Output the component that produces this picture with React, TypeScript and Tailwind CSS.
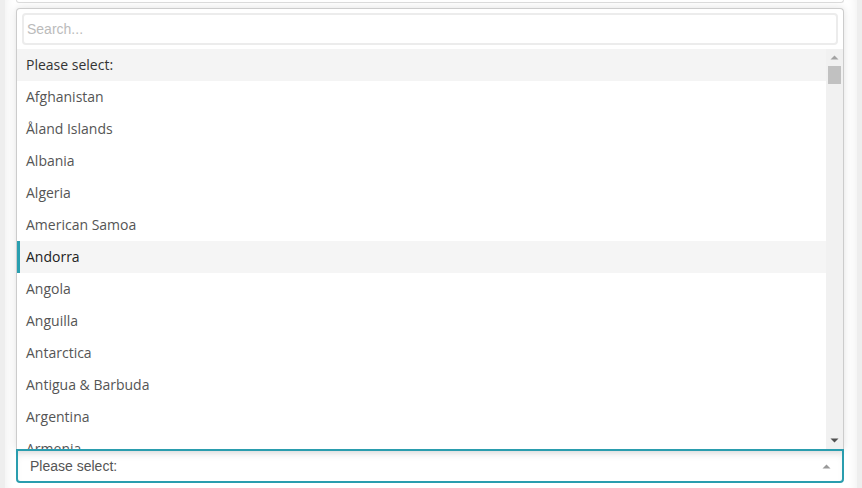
import React from "react";

const countries = [
  "Afghanistan",
  "Åland Islands",
  "Albania",
  "Algeria",
  "American Samoa",
  "Andorra",
  "Angola",
  "Anguilla",
  "Antarctica",
  "Antigua & Barbuda",
  "Argentina",
  "Armenia",
  "Aruba",
];

const App = () => {
  return (
    <div className="w-[862px] h-[488px] overflow-hidden bg-[#eeeeee] px-[5px]">
      <div className="h-full bg-white pl-[11px] pr-[13px] flex flex-col shadow-[inset_8px_0_8px_-6px_rgba(0,0,0,0.06),inset_-8px_0_8px_-6px_rgba(0,0,0,0.06)]">
        <div className="h-[3px] border border-t-0 border-[#dddddd] rounded-b-[3px]" />
        <div className="mt-[5px] flex flex-col border border-b-0 border-[#cccccc] rounded-t-[4px] bg-white shadow-[0_0_8px_rgba(0,0,0,0.12)]">
          <div className="px-[5px] pt-[4px] pb-[4px]">
            <div className="h-[32px] border-2 border-[#ececec] rounded-[4px] flex items-center px-[3px] font-['Liberation_Sans',Arial,sans-serif] text-[14px] text-[#bbbbbb]">
              Search...
            </div>
          </div>
          <div className="flex h-[400px]">
            <div className="flex-1 overflow-hidden font-['Open_Sans',sans-serif] text-[14px]">
              <div className="h-[32px] flex items-center pl-[9px] pb-[2px] bg-[#f4f4f4] text-[#333333]">
                Please select:
              </div>
              {countries.map((c) =>
                c === "Andorra" ? (
                  <div
                    key={c}
                    className="h-[32px] flex items-center pl-[6px] pb-[2px] bg-[#f5f5f5] border-l-[3px] border-[#2a9fb0] text-[#222222]"
                  >
                    {c}
                  </div>
                ) : (
                  <div key={c} className="h-[32px] flex items-center pl-[9px] pb-[2px] text-[#555555]">
                    {c}
                  </div>
                )
              )}
            </div>
            <div className="w-[17px] bg-[#f1f1f1] flex flex-col items-center">
              <div className="h-[17px] w-full flex items-center justify-center">
                <svg width="9" height="5" viewBox="0 0 9 5">
                  <path d="M0.5 4.5 L4.5 0.5 L8.5 4.5 Z" fill="#a3a3a3" />
                </svg>
              </div>
              <div className="w-[13px] h-[18px] bg-[#c1c1c1]" />
              <div className="flex-1" />
              <div className="h-[17px] w-full flex items-center justify-center">
                <svg width="9" height="5" viewBox="0 0 9 5">
                  <path d="M0.5 0.5 L8.5 0.5 L4.5 4.5 Z" fill="#505050" />
                </svg>
              </div>
            </div>
          </div>
        </div>
        <div className="h-[34px] border-2 border-[#2a9dae] rounded-b-[4px] flex items-center pl-[12px] pr-[11px] shadow-[inset_0_6px_8px_-4px_rgba(0,0,0,0.12)] font-['Liberation_Sans',Arial,sans-serif] text-[14px] text-[#555555]">
          <span className="flex-1">Please select:</span>
          <svg width="9" height="5" viewBox="0 0 9 5">
            <path d="M0.5 4.5 L4.5 0.5 L8.5 4.5 Z" fill="#999999" />
          </svg>
        </div>
      </div>
    </div>
  );
};

export default App;
